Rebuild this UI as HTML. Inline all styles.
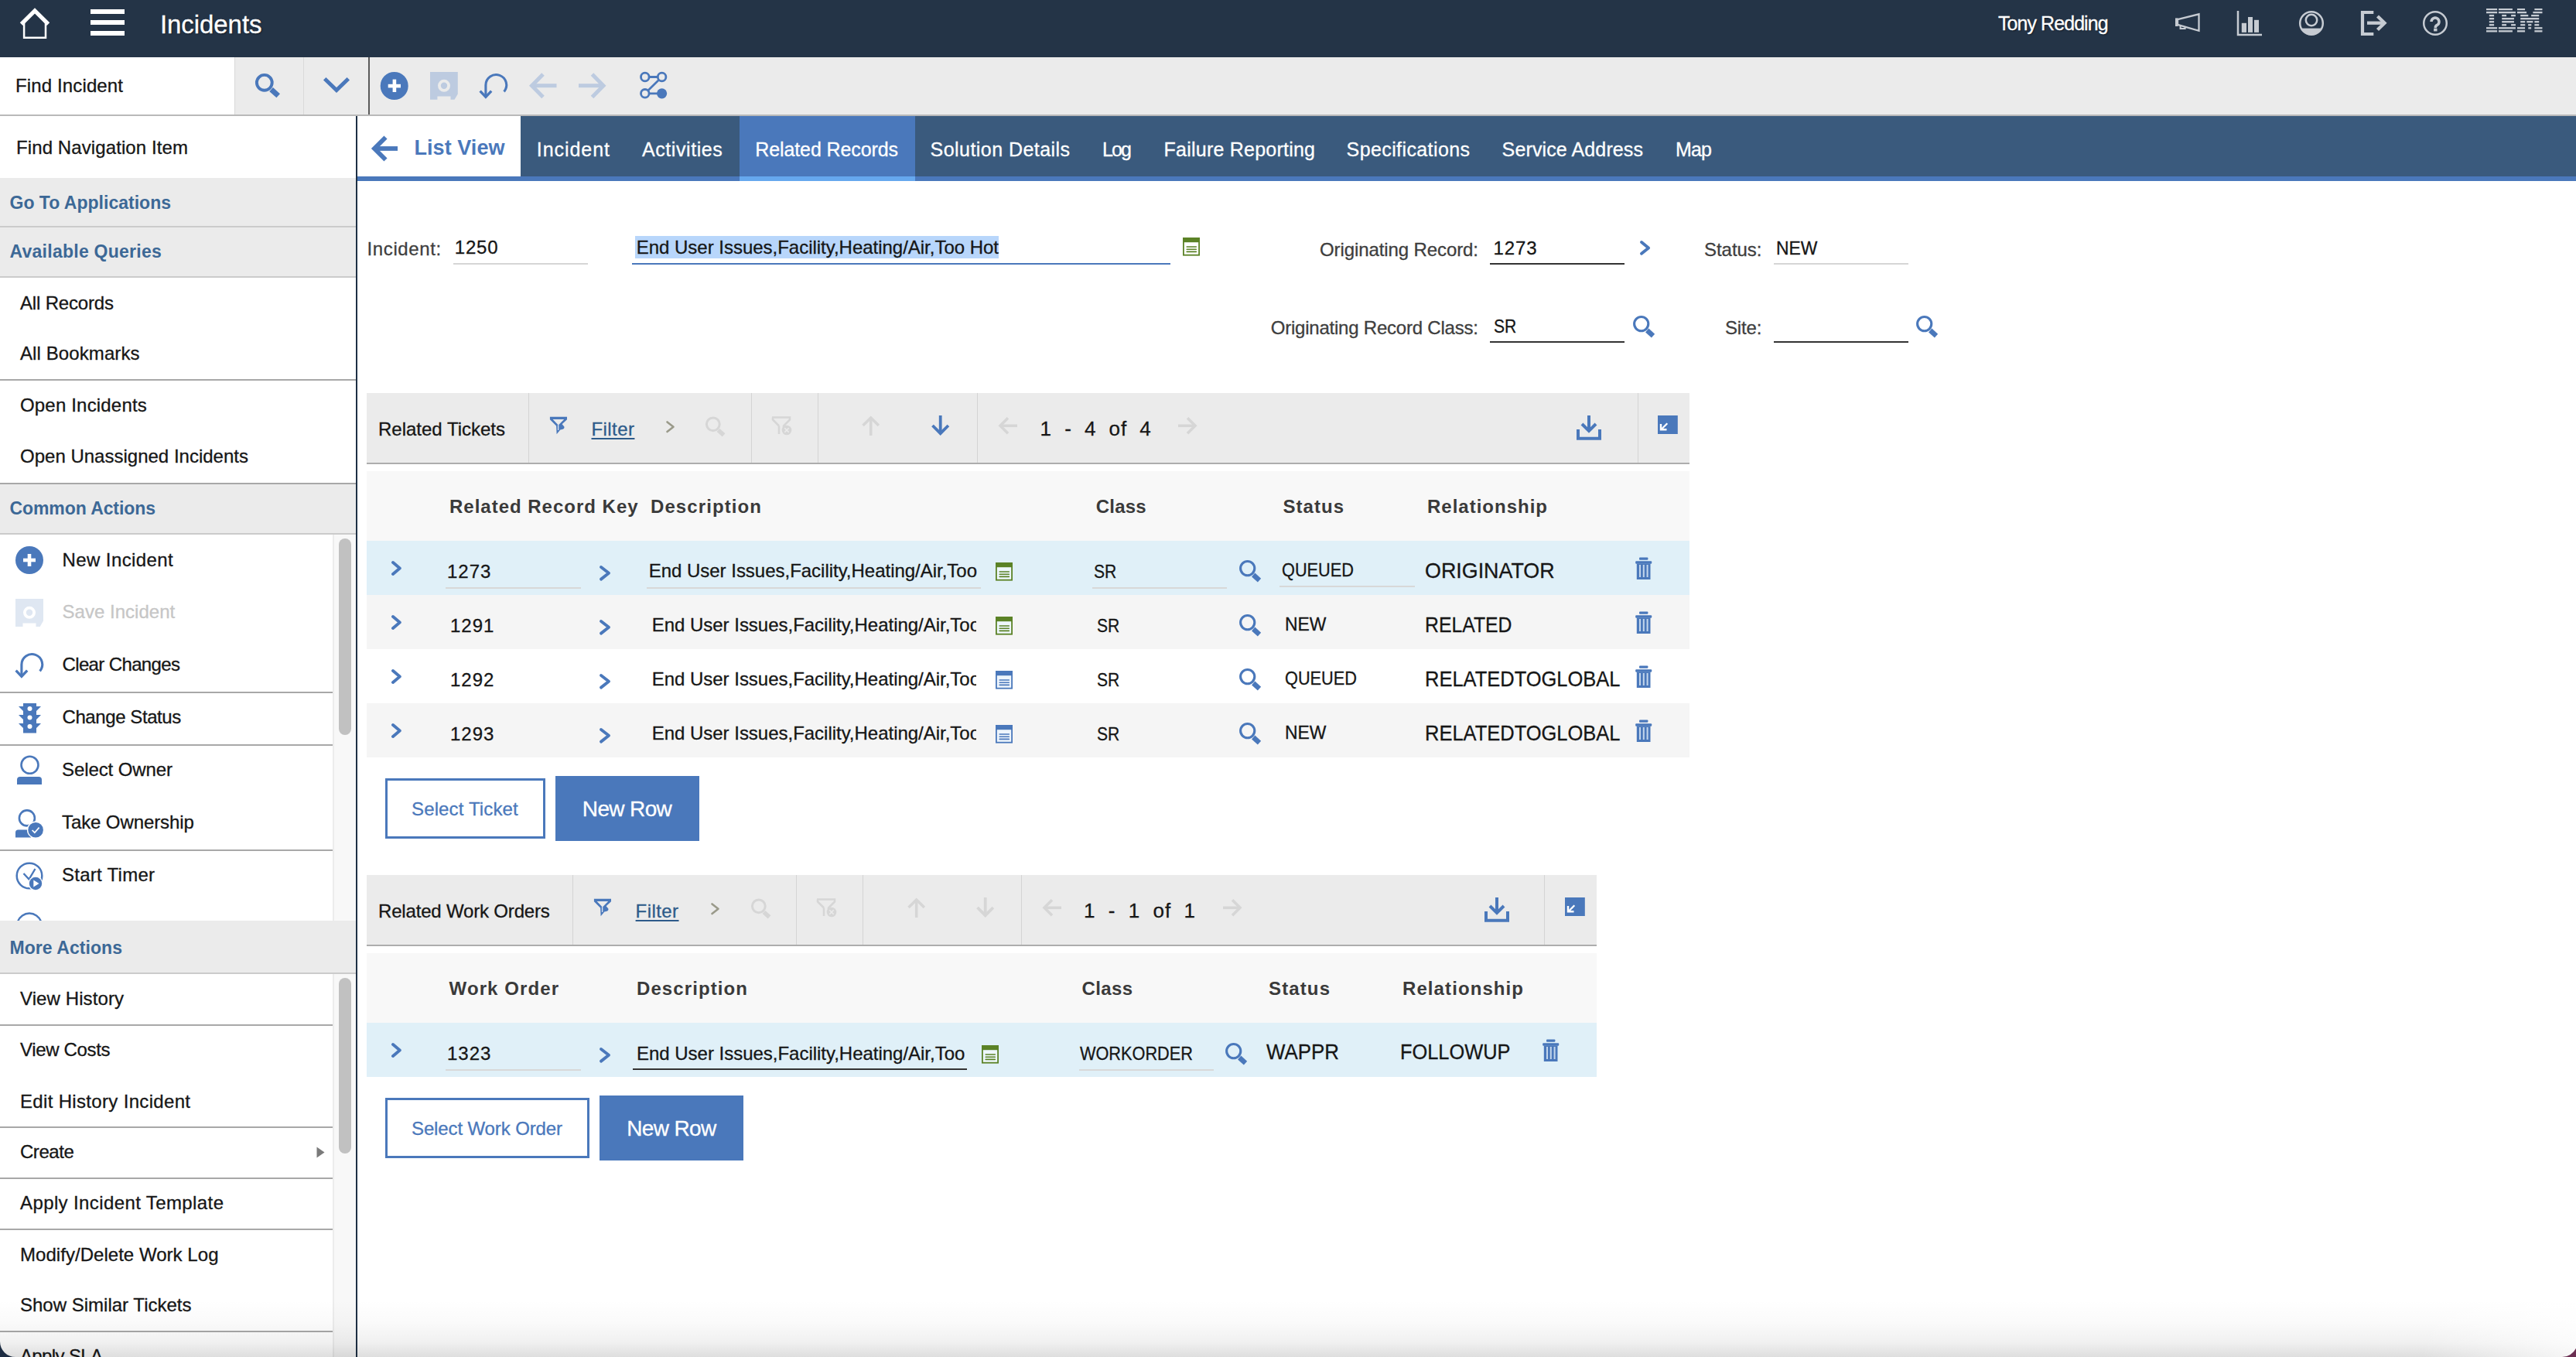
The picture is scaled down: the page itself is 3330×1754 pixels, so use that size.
<!DOCTYPE html>
<html><head><meta charset="utf-8"><title>Incidents</title>
<style>
html,body{margin:0;padding:0;}
body{width:3330px;height:1754px;overflow:hidden;position:relative;background:#fff;font-family:"Liberation Sans", sans-serif;}
div,svg{box-sizing:border-box;}
[id^=t]{-webkit-text-stroke:0.3px currentColor;}
[id^=t][style*="font-weight:700"]{-webkit-text-stroke:0;}
</style></head><body>
<div style="position:absolute;left:0px;top:0px;width:3330px;height:74px;background:#243447;"></div>
<svg style="position:absolute;left:0px;top:0px;overflow:visible;" width="80" height="74" viewBox="0 0 80 74"><path d="M31.1 29 V48.8 H59 V29" fill="none" stroke="#fff" stroke-width="2.5"/><path d="M27.6 31.2 L45 14 L62.4 31.2" fill="none" stroke="#fff" stroke-width="5.2"/></svg>
<div style="position:absolute;left:117px;top:11.6px;width:44px;height:6.6px;background:#fff;"></div>
<div style="position:absolute;left:117px;top:25.6px;width:44px;height:6.6px;background:#fff;"></div>
<div style="position:absolute;left:117px;top:39.6px;width:44px;height:6.6px;background:#fff;"></div>
<div id="t1" style="position:absolute;left:207.00px;top:14.57px;font-size:33px;line-height:33px;font-weight:400;color:#fff;white-space:pre;letter-spacing:-0.074px;text-shadow:1px 1px 2px rgba(0,0,0,.5);">Incidents</div>
<div id="t2" style="position:absolute;left:2583.00px;top:17.84px;font-size:25px;line-height:25px;font-weight:400;color:#fff;white-space:pre;letter-spacing:-0.936px;text-shadow:1px 1px 2px rgba(0,0,0,.5);">Tony Redding</div>
<svg style="position:absolute;left:2810px;top:14px;overflow:visible;" width="40" height="30" viewBox="0 0 40 30"><path d="M5 11.2 L32.5 4.3 V25.8 L5 17.8 Z" fill="none" stroke="#c6cbd2" stroke-width="2.3" stroke-linejoin="miter"/><rect x="2" y="9.4" width="3.6" height="10.6" fill="#c6cbd2"/><path d="M8.6 18.6 V23 H14.6 V20.5" fill="none" stroke="#c6cbd2" stroke-width="2.1"/></svg>
<svg style="position:absolute;left:2890px;top:12px;overflow:visible;" width="36" height="36" viewBox="0 0 36 36"><path d="M3 2 V33 H34" fill="none" stroke="#c6cbd2" stroke-width="2.5"/><rect x="7.8" y="17.8" width="6.2" height="12.1" fill="#c6cbd2"/><rect x="16" y="10" width="6" height="19.9" fill="#c6cbd2"/><rect x="24" y="13.8" width="6" height="16.1" fill="#c6cbd2"/></svg>
<svg style="position:absolute;left:2970px;top:12px;overflow:visible;" width="36" height="36" viewBox="0 0 36 36"><defs><clipPath id="uc"><circle cx="18" cy="18" r="15"/></clipPath></defs><circle cx="18" cy="18" r="14.8" fill="none" stroke="#c6cbd2" stroke-width="2.5"/><circle cx="18" cy="14" r="7.2" fill="none" stroke="#c6cbd2" stroke-width="2.5"/><rect x="0" y="24.6" width="36" height="12" fill="#c6cbd2" clip-path="url(#uc)" rx="0"/></svg>
<svg style="position:absolute;left:3050px;top:12px;overflow:visible;" width="40" height="36" viewBox="0 0 40 36"><path d="M18.3 4 H4 V32 H18.3" fill="none" stroke="#c6cbd2" stroke-width="4.2"/><path d="M10 17.7 H32" stroke="#c6cbd2" stroke-width="4.3"/><path d="M23.5 9 L32.5 17.7 L23.5 26.5" fill="none" stroke="#c6cbd2" stroke-width="4.3"/></svg>
<svg style="position:absolute;left:3130px;top:12px;overflow:visible;" width="36" height="36" viewBox="0 0 36 36"><circle cx="18" cy="18" r="14.8" fill="none" stroke="#c6cbd2" stroke-width="2.5"/><path d="M13 16 A5 5 0 1 1 20.6 20.3 Q18.3 21.4 18.3 23.2 V24.2" fill="none" stroke="#c6cbd2" stroke-width="3.5"/><rect x="16.1" y="24.8" width="4.4" height="3.6" fill="#c6cbd2"/></svg>
<svg style="position:absolute;left:3213.7989503431572px;top:10.853855470327009px;overflow:visible;" width="73" height="31" viewBox="0 0 73 31"><rect x="0.00" y="0.00" width="14.13" height="2.22" fill="#c6cbd2"/><rect x="15.95" y="0.00" width="17.97" height="2.22" fill="#c6cbd2"/><rect x="39.97" y="0.00" width="10.09" height="2.22" fill="#c6cbd2"/><rect x="62.37" y="0.00" width="10.09" height="2.22" fill="#c6cbd2"/><rect x="0.00" y="3.94" width="14.13" height="2.32" fill="#c6cbd2"/><rect x="15.95" y="3.94" width="22.00" height="2.32" fill="#c6cbd2"/><rect x="39.97" y="3.94" width="12.11" height="2.32" fill="#c6cbd2"/><rect x="60.36" y="3.94" width="12.11" height="2.32" fill="#c6cbd2"/><rect x="3.84" y="7.97" width="6.26" height="2.32" fill="#c6cbd2"/><rect x="20.19" y="7.97" width="5.85" height="2.32" fill="#c6cbd2"/><rect x="32.10" y="7.97" width="5.85" height="2.32" fill="#c6cbd2"/><rect x="44.21" y="7.97" width="10.09" height="2.32" fill="#c6cbd2"/><rect x="58.13" y="7.97" width="10.09" height="2.32" fill="#c6cbd2"/><rect x="3.84" y="12.01" width="6.26" height="2.32" fill="#c6cbd2"/><rect x="20.19" y="12.01" width="15.74" height="2.32" fill="#c6cbd2"/><rect x="44.21" y="12.01" width="24.02" height="2.32" fill="#c6cbd2"/><rect x="3.84" y="16.05" width="6.26" height="2.32" fill="#c6cbd2"/><rect x="20.19" y="16.05" width="15.74" height="2.32" fill="#c6cbd2"/><rect x="44.21" y="16.05" width="6.06" height="2.32" fill="#c6cbd2"/><rect x="52.28" y="16.05" width="8.07" height="2.32" fill="#c6cbd2"/><rect x="62.37" y="16.05" width="5.85" height="2.32" fill="#c6cbd2"/><rect x="3.84" y="20.08" width="6.26" height="2.32" fill="#c6cbd2"/><rect x="20.19" y="20.08" width="5.85" height="2.32" fill="#c6cbd2"/><rect x="32.10" y="20.08" width="5.85" height="2.32" fill="#c6cbd2"/><rect x="44.21" y="20.08" width="6.06" height="2.32" fill="#c6cbd2"/><rect x="54.10" y="20.08" width="4.24" height="2.32" fill="#c6cbd2"/><rect x="62.37" y="20.08" width="5.85" height="2.32" fill="#c6cbd2"/><rect x="0.00" y="24.12" width="14.13" height="2.32" fill="#c6cbd2"/><rect x="15.95" y="24.12" width="22.00" height="2.32" fill="#c6cbd2"/><rect x="39.97" y="24.12" width="10.09" height="2.32" fill="#c6cbd2"/><rect x="54.30" y="24.12" width="3.84" height="2.32" fill="#c6cbd2"/><rect x="62.37" y="24.12" width="10.09" height="2.32" fill="#c6cbd2"/><rect x="0.00" y="28.16" width="14.13" height="2.32" fill="#c6cbd2"/><rect x="15.95" y="28.16" width="17.97" height="2.32" fill="#c6cbd2"/><rect x="39.97" y="28.16" width="10.09" height="2.32" fill="#c6cbd2"/><rect x="62.37" y="28.16" width="10.09" height="2.32" fill="#c6cbd2"/></svg>
<div style="position:absolute;left:0px;top:74px;width:3330px;height:74px;background:#ebebeb;"></div>
<div style="position:absolute;left:0px;top:148px;width:3330px;height:2px;background:#b9b9b9;"></div>
<div style="position:absolute;left:0px;top:74px;width:303px;height:74px;background:#fff;"></div>
<div style="position:absolute;left:303px;top:74px;width:1px;height:74px;background:#d9d9d9;"></div>
<div style="position:absolute;left:392px;top:74px;width:1px;height:74px;background:#d9d9d9;"></div>
<div style="position:absolute;left:476px;top:74px;width:2px;height:74px;background:#5a5a5a;"></div>
<div id="t3" style="position:absolute;left:20.00px;top:99.18px;font-size:24px;line-height:24px;font-weight:400;color:#161616;white-space:pre;letter-spacing:0.132px;">Find Incident</div>
<svg style="position:absolute;left:320px;top:80px;overflow:visible;" width="50" height="60" viewBox="0 0 50 60"><circle cx="21.8" cy="26.8" r="9.9" fill="none" stroke="#4a78bb" stroke-width="3.9"/><g transform="translate(30.6 35.6) rotate(42)"><rect x="0" y="-3.4" width="12.2" height="6.8" fill="#4a78bb"/></g></svg>
<svg style="position:absolute;left:410px;top:90px;overflow:visible;" width="50" height="40" viewBox="0 0 50 40"><path d="M11.5 13.5 L25 26.5 L38.5 13.5" fill="none" stroke="#4a78bb" stroke-width="5" stroke-linecap="square"/></svg>
<svg style="position:absolute;left:490px;top:91px;overflow:visible;" width="40" height="40" viewBox="0 0 40 40"><circle cx="19.7" cy="20" r="18" fill="#4a78bb"/><rect x="11.7" y="17.8" width="16.3" height="4.6" fill="#fff"/><rect x="17.6" y="11.6" width="4.6" height="16.4" fill="#fff"/></svg>
<svg style="position:absolute;left:556px;top:93px;overflow:visible;" width="36" height="36" viewBox="0 0 36 36"><path d="M0 0 H35.8 V28.5 L31.5 35.7 H26.5 V31.5 H9.4 V35.7 H0 Z" fill="#bdcbe0"/><circle cx="18" cy="17.8" r="6.1" fill="none" stroke="#ebebeb" stroke-width="3.8"/></svg>
<svg style="position:absolute;left:619px;top:92.5px;overflow:visible;" width="40" height="40" viewBox="0 0 40 40"><path d="M8.9 32 V16.9 A13.4 13.4 0 1 1 32.6 25.5" fill="none" stroke="#4a78bb" stroke-width="3.1"/><path d="M1.6 24.6 L8.9 32.4 L16.2 24.6" fill="none" stroke="#4a78bb" stroke-width="3.3"/></svg>
<svg style="position:absolute;left:682px;top:92px;overflow:visible;" width="40" height="38" viewBox="0 0 40 38"><path d="M37.5 18.7 H6" stroke="#bdcbe0" stroke-width="5"/><path d="M20 4 L5.5 18.7 L20 33.4" fill="none" stroke="#bdcbe0" stroke-width="5"/></svg>
<svg style="position:absolute;left:746px;top:92px;overflow:visible;" width="40" height="38" viewBox="0 0 40 38"><path d="M2 18.7 H33.5" stroke="#bdcbe0" stroke-width="5"/><path d="M19.5 4 L34 18.7 L19.5 33.4" fill="none" stroke="#bdcbe0" stroke-width="5"/></svg>
<svg style="position:absolute;left:820px;top:88px;overflow:visible;" width="44" height="44" viewBox="0 0 44 44"><path d="M13.8 11.5 H35.6 L13.8 32.8 H35.6" fill="none" stroke="#4a78bb" stroke-width="2.8"/><circle cx="13.8" cy="11.5" r="5.3" fill="#ebebeb" stroke="#4a78bb" stroke-width="2.8"/><circle cx="35.6" cy="11.5" r="5.3" fill="#ebebeb" stroke="#4a78bb" stroke-width="2.8"/><circle cx="13.8" cy="32.8" r="5.3" fill="#ebebeb" stroke="#4a78bb" stroke-width="2.8"/><circle cx="35.6" cy="32.8" r="6.6" fill="#4a78bb"/></svg>
<div style="position:absolute;left:0px;top:150px;width:460px;height:80px;background:#fff;"></div>
<div id="t4" style="position:absolute;left:21.00px;top:178.93px;font-size:24px;line-height:24px;font-weight:400;color:#161616;white-space:pre;letter-spacing:0.100px;">Find Navigation Item</div>
<div style="position:absolute;left:0px;top:230px;width:460px;height:62px;background:#ebebeb;"></div>
<div style="position:absolute;left:0px;top:292px;width:460px;height:2px;background:#cbcbcb;"></div>
<div id="t5" style="position:absolute;left:12.50px;top:250.53px;font-size:23px;line-height:23px;font-weight:700;color:#3c6896;white-space:pre;letter-spacing:0.013px;">Go To Applications</div>
<div style="position:absolute;left:0px;top:294px;width:460px;height:63px;background:#ebebeb;"></div>
<div style="position:absolute;left:0px;top:357px;width:460px;height:2px;background:#cbcbcb;"></div>
<div id="t6" style="position:absolute;left:12.50px;top:314.28px;font-size:23px;line-height:23px;font-weight:700;color:#3c6896;white-space:pre;letter-spacing:0.254px;">Available Queries</div>
<div id="t7" style="position:absolute;left:26.00px;top:379.68px;font-size:24px;line-height:24px;font-weight:400;color:#161616;white-space:pre;letter-spacing:-0.172px;">All Records</div>
<div id="t8" style="position:absolute;left:26.00px;top:445.43px;font-size:24px;line-height:24px;font-weight:400;color:#161616;white-space:pre;letter-spacing:0.094px;">All Bookmarks</div>
<div style="position:absolute;left:0px;top:490px;width:460px;height:2px;background:#a8a8a8;"></div>
<div id="t9" style="position:absolute;left:26.00px;top:511.68px;font-size:24px;line-height:24px;font-weight:400;color:#161616;white-space:pre;letter-spacing:0.178px;">Open Incidents</div>
<div id="t10" style="position:absolute;left:26.00px;top:577.68px;font-size:24px;line-height:24px;font-weight:400;color:#161616;white-space:pre;letter-spacing:0.006px;">Open Unassigned Incidents</div>
<div style="position:absolute;left:0px;top:624px;width:460px;height:2px;background:#a8a8a8;"></div>
<div style="position:absolute;left:0px;top:626px;width:460px;height:63px;background:#ebebeb;"></div>
<div style="position:absolute;left:0px;top:689px;width:460px;height:2px;background:#cbcbcb;"></div>
<div id="t11" style="position:absolute;left:12.50px;top:646.28px;font-size:23px;line-height:23px;font-weight:700;color:#3c6896;white-space:pre;letter-spacing:-0.081px;">Common Actions</div>
<div style="position:absolute;left:430px;top:691px;width:30px;height:499px;background:#f8f8f8;"></div>
<div style="position:absolute;left:430px;top:691px;width:2px;height:499px;background:#ececec;"></div>
<div style="position:absolute;left:438px;top:696px;width:16px;height:254px;background:#c1c1c1;border-radius:8px;"></div>
<div style="position:absolute;left:0px;top:894px;width:430px;height:2px;background:#a8a8a8;"></div>
<div style="position:absolute;left:0px;top:962px;width:430px;height:2px;background:#a8a8a8;"></div>
<div style="position:absolute;left:0px;top:1098px;width:430px;height:2px;background:#a8a8a8;"></div>
<div id="t12" style="position:absolute;left:80.50px;top:712.18px;font-size:24px;line-height:24px;font-weight:400;color:#161616;white-space:pre;letter-spacing:0.409px;">New Incident</div>
<div id="t13" style="position:absolute;left:80.50px;top:779.18px;font-size:24px;line-height:24px;font-weight:400;color:#c6c6c6;white-space:pre;letter-spacing:0.026px;">Save Incident</div>
<div id="t14" style="position:absolute;left:80.50px;top:847.18px;font-size:24px;line-height:24px;font-weight:400;color:#161616;white-space:pre;letter-spacing:-0.633px;">Clear Changes</div>
<div id="t15" style="position:absolute;left:80.50px;top:915.18px;font-size:24px;line-height:24px;font-weight:400;color:#161616;white-space:pre;letter-spacing:-0.419px;">Change Status</div>
<div id="t16" style="position:absolute;left:80.00px;top:983.43px;font-size:24px;line-height:24px;font-weight:400;color:#161616;white-space:pre;letter-spacing:-0.097px;">Select Owner</div>
<div id="t17" style="position:absolute;left:80.00px;top:1050.93px;font-size:24px;line-height:24px;font-weight:400;color:#161616;white-space:pre;letter-spacing:-0.102px;">Take Ownership</div>
<div id="t18" style="position:absolute;left:80.00px;top:1119.18px;font-size:24px;line-height:24px;font-weight:400;color:#161616;white-space:pre;letter-spacing:0.264px;">Start Timer</div>
<svg style="position:absolute;left:20px;top:706px;overflow:visible;" width="36" height="36" viewBox="0 0 36 36"><circle cx="18" cy="18" r="18" fill="#4a78bb"/><rect x="10" y="15.7" width="16" height="4.6" fill="#fff"/><rect x="15.7" y="10" width="4.6" height="16" fill="#fff"/></svg>
<svg style="position:absolute;left:20px;top:774px;overflow:visible;" width="36" height="36" viewBox="0 0 36 36"><path d="M0 0 H36 V28.5 L31.7 36 H26.5 V31.5 H9.5 V36 H0 Z" fill="#dfe7f2"/><circle cx="18" cy="17.8" r="6.1" fill="none" stroke="#fff" stroke-width="3.8"/></svg>
<svg style="position:absolute;left:19px;top:842px;overflow:visible;" width="40" height="40" viewBox="0 0 40 40"><path d="M8.9 32 V16.9 A13.4 13.4 0 1 1 32.6 25.5" fill="none" stroke="#4a78bb" stroke-width="3.1"/><path d="M1.6 24.6 L8.9 32.4 L16.2 24.6" fill="none" stroke="#4a78bb" stroke-width="3.3"/></svg>
<svg style="position:absolute;left:22px;top:907px;overflow:visible;" width="34" height="44" viewBox="0 0 34 44"><rect x="8" y="2" width="17" height="38.5" fill="#4a78bb"/><path d="M2 6 H8 V12 Z M31 6 H25 V12 Z M2 17 H8 V23 Z M31 17 H25 V23 Z M2 28 H8 V34 Z M31 28 H25 V34 Z" fill="#4a78bb"/><circle cx="16.5" cy="9" r="3" fill="#fff"/><circle cx="16.5" cy="20.5" r="3" fill="#fff"/><circle cx="16.5" cy="32" r="3" fill="#fff"/></svg>
<svg style="position:absolute;left:20px;top:976px;overflow:visible;" width="36" height="40" viewBox="0 0 36 40"><circle cx="18.5" cy="12.8" r="11" fill="none" stroke="#4a78bb" stroke-width="2.6"/><path d="M2 38 V32 Q2 28 6 28 H30 Q34 28 34 32 V38 Z" fill="#4a78bb"/></svg>
<svg style="position:absolute;left:18px;top:1044px;overflow:visible;" width="40" height="40" viewBox="0 0 40 40"><circle cx="16.9" cy="13.4" r="10" fill="none" stroke="#4a78bb" stroke-width="2.6"/><path d="M2 38.5 V32 Q2 28.5 5.5 28.5 H22 V38.5 Z" fill="#4a78bb"/><circle cx="28.1" cy="28.7" r="11.2" fill="#fff"/><circle cx="28.1" cy="28.7" r="9.8" fill="#4a78bb"/><path d="M23.6 29 L26.8 32.2 L32.6 25.6" fill="none" stroke="#fff" stroke-width="1.7"/></svg>
<svg style="position:absolute;left:18px;top:1112px;overflow:visible;" width="40" height="40" viewBox="0 0 40 40"><circle cx="20" cy="20" r="16.3" fill="none" stroke="#4a78bb" stroke-width="2.5"/><path d="M12.5 17 L19.5 24.5 L27.5 11" fill="none" stroke="#4a78bb" stroke-width="2.4"/><circle cx="28" cy="30" r="9.5" fill="#fff"/><circle cx="28" cy="30" r="8.2" fill="#4a78bb"/><path d="M25.3 25.5 L32.5 30 L25.3 34.5 Z" fill="#fff"/></svg>
<svg style="position:absolute;left:18px;top:1180px;overflow:visible;" width="40" height="12" viewBox="0 0 40 12"><path d="M5 11 A16 16 0 0 1 35 11" fill="none" stroke="#4a78bb" stroke-width="2.5"/></svg>
<div style="position:absolute;left:0px;top:1190px;width:460px;height:67px;background:#ebebeb;"></div>
<div style="position:absolute;left:0px;top:1257px;width:460px;height:2px;background:#cbcbcb;"></div>
<div id="t19" style="position:absolute;left:12.50px;top:1213.53px;font-size:23px;line-height:23px;font-weight:700;color:#3c6896;white-space:pre;letter-spacing:0.061px;">More Actions</div>
<div style="position:absolute;left:430px;top:1259px;width:30px;height:495px;background:#f8f8f8;"></div>
<div style="position:absolute;left:430px;top:1259px;width:2px;height:495px;background:#ececec;"></div>
<div style="position:absolute;left:438px;top:1264px;width:16px;height:227px;background:#c1c1c1;border-radius:8px;"></div>
<div style="position:absolute;left:0px;top:1324px;width:430px;height:2px;background:#a8a8a8;"></div>
<div style="position:absolute;left:0px;top:1456px;width:430px;height:2px;background:#a8a8a8;"></div>
<div style="position:absolute;left:0px;top:1522px;width:430px;height:2px;background:#a8a8a8;"></div>
<div style="position:absolute;left:0px;top:1588px;width:430px;height:2px;background:#a8a8a8;"></div>
<div style="position:absolute;left:0px;top:1719.5px;width:430px;height:2px;background:#a8a8a8;"></div>
<div id="t20" style="position:absolute;left:26.00px;top:1279.18px;font-size:24px;line-height:24px;font-weight:400;color:#161616;white-space:pre;letter-spacing:0.097px;">View History</div>
<div id="t21" style="position:absolute;left:26.00px;top:1345.18px;font-size:24px;line-height:24px;font-weight:400;color:#161616;white-space:pre;letter-spacing:-0.345px;">View Costs</div>
<div id="t22" style="position:absolute;left:26.00px;top:1411.68px;font-size:24px;line-height:24px;font-weight:400;color:#161616;white-space:pre;letter-spacing:0.329px;">Edit History Incident</div>
<div id="t23" style="position:absolute;left:26.00px;top:1477.18px;font-size:24px;line-height:24px;font-weight:400;color:#161616;white-space:pre;letter-spacing:-0.459px;">Create</div>
<svg style="position:absolute;left:408px;top:1481px;overflow:visible;" width="14" height="18" viewBox="0 0 14 18"><path d="M1.5 1.5 L11.5 8.5 L1.5 15.5 Z" fill="#7a7a7a"/></svg>
<div id="t24" style="position:absolute;left:26.00px;top:1543.43px;font-size:24px;line-height:24px;font-weight:400;color:#161616;white-space:pre;letter-spacing:0.391px;">Apply Incident Template</div>
<div id="t25" style="position:absolute;left:26.00px;top:1609.68px;font-size:24px;line-height:24px;font-weight:400;color:#161616;white-space:pre;letter-spacing:0.039px;">Modify/Delete Work Log</div>
<div id="t26" style="position:absolute;left:26.00px;top:1675.18px;font-size:24px;line-height:24px;font-weight:400;color:#161616;white-space:pre;letter-spacing:0.006px;">Show Similar Tickets</div>
<div id="t27" style="position:absolute;left:26.00px;top:1740.68px;font-size:24px;line-height:24px;font-weight:400;color:#161616;white-space:pre;letter-spacing:-0.635px;">Apply SLA</div>
<div style="position:absolute;left:460px;top:150px;width:2px;height:1604px;background:#1e3045;"></div>
<div style="position:absolute;left:462px;top:150px;width:211px;height:78px;background:#fff;"></div>
<div style="position:absolute;left:673px;top:150px;width:2657px;height:78px;background:#3a5a7d;"></div>
<div style="position:absolute;left:956px;top:150px;width:227px;height:78px;background:#4a78bb;"></div>
<div style="position:absolute;left:462px;top:228px;width:2868px;height:5.6px;background:#4a78bb;"></div>
<div style="position:absolute;left:956px;top:228px;width:227px;height:5.6px;background:#66a8ee;"></div>
<svg style="position:absolute;left:478px;top:172px;overflow:visible;" width="40" height="40" viewBox="0 0 40 40"><path d="M36 20 H8" stroke="#4a78bb" stroke-width="5.8"/><path d="M20.5 5.5 L6 20 L20.5 34.5" fill="none" stroke="#4a78bb" stroke-width="5.8"/></svg>
<div id="t28" style="position:absolute;left:535.50px;top:178.39px;font-size:27px;line-height:27px;font-weight:700;color:#4a78bb;white-space:pre;letter-spacing:0.057px;">List View</div>
<div id="t29" style="position:absolute;left:693.75px;top:180.84px;font-size:25px;line-height:25px;font-weight:400;color:#fff;white-space:pre;letter-spacing:0.955px;">Incident</div>
<div id="t30" style="position:absolute;left:830.00px;top:180.84px;font-size:25px;line-height:25px;font-weight:400;color:#fff;white-space:pre;letter-spacing:0.568px;">Activities</div>
<div id="t31" style="position:absolute;left:976.25px;top:180.84px;font-size:25px;line-height:25px;font-weight:400;color:#fff;white-space:pre;letter-spacing:-0.105px;">Related Records</div>
<div id="t32" style="position:absolute;left:1202.60px;top:180.84px;font-size:25px;line-height:25px;font-weight:400;color:#fff;white-space:pre;letter-spacing:0.445px;">Solution Details</div>
<div id="t33" style="position:absolute;left:1425.00px;top:180.84px;font-size:25px;line-height:25px;font-weight:400;color:#fff;white-space:pre;letter-spacing:-1.859px;">Log</div>
<div id="t34" style="position:absolute;left:1504.60px;top:180.84px;font-size:25px;line-height:25px;font-weight:400;color:#fff;white-space:pre;letter-spacing:0.227px;">Failure Reporting</div>
<div id="t35" style="position:absolute;left:1740.60px;top:180.84px;font-size:25px;line-height:25px;font-weight:400;color:#fff;white-space:pre;letter-spacing:0.396px;">Specifications</div>
<div id="t36" style="position:absolute;left:1941.60px;top:180.84px;font-size:25px;line-height:25px;font-weight:400;color:#fff;white-space:pre;letter-spacing:0.126px;">Service Address</div>
<div id="t37" style="position:absolute;left:2166.00px;top:180.84px;font-size:25px;line-height:25px;font-weight:400;color:#fff;white-space:pre;letter-spacing:-0.820px;">Map</div>
<div id="t38" style="position:absolute;left:474.50px;top:310.43px;font-size:24px;line-height:24px;font-weight:400;color:#3e3e3e;white-space:pre;letter-spacing:0.627px;">Incident:</div>
<div id="t39" style="position:absolute;left:587.75px;top:307.68px;font-size:24px;line-height:24px;font-weight:400;color:#161616;white-space:pre;letter-spacing:0.786px;">1250</div>
<div style="position:absolute;left:586px;top:340px;width:174px;height:2px;background:#d6d6d6;"></div>
<div style="position:absolute;left:821px;top:304.5px;width:470px;height:29.5px;background:#b8d6fb;"></div>
<div id="t40" style="position:absolute;left:822.75px;top:307.68px;font-size:24px;line-height:24px;font-weight:400;color:#161616;white-space:pre;letter-spacing:-0.019px;">End User Issues,Facility,Heating/Air,Too Hot</div>
<div style="position:absolute;left:817px;top:340px;width:696px;height:2.2px;background:#4a78bb;"></div>
<svg style="position:absolute;left:1529px;top:307px;overflow:visible;" width="22" height="24" viewBox="0 0 22 24"><rect x="0.9" y="0.9" width="20.2" height="21.8" fill="#fff" stroke="#5b8226" stroke-width="1.8"/><rect x="0" y="0" width="22" height="6.2" fill="#5b8226"/><path d="M5.2 12 H17.3 M5.2 15.2 H17.3 M5.2 18.4 H17.3" stroke="#5b8226" stroke-width="1.6" stroke-linecap="round"/></svg>
<div id="t41" style="position:absolute;left:1706.00px;top:310.68px;font-size:24px;line-height:24px;font-weight:400;color:#3e3e3e;white-space:pre;letter-spacing:-0.098px;">Originating Record:</div>
<div id="t42" style="position:absolute;left:1930.60px;top:308.68px;font-size:24px;line-height:24px;font-weight:400;color:#161616;white-space:pre;letter-spacing:0.870px;">1273</div>
<div style="position:absolute;left:1926px;top:339.5px;width:174px;height:2.2px;background:#333;"></div>
<svg style="position:absolute;left:2118.0px;top:308.5px;overflow:visible;" width="17.1" height="22.8" viewBox="0 0 17.1 22.8"><path d="M4 4 L13.1 11.4 L4 18.8" fill="none" stroke="#4a78bb" stroke-width="3.9" stroke-linecap="round" stroke-linejoin="round"/></svg>
<div id="t43" style="position:absolute;left:2203.00px;top:310.68px;font-size:24px;line-height:24px;font-weight:400;color:#3e3e3e;white-space:pre;letter-spacing:-0.036px;">Status:</div>
<div id="t44" style="position:absolute;left:2296.00px;top:308.68px;font-size:24px;line-height:24px;font-weight:400;color:#161616;white-space:pre;letter-spacing:0px;transform:scaleX(0.9531);transform-origin:0 0;">NEW</div>
<div style="position:absolute;left:2292.5px;top:339.5px;width:174px;height:2.2px;background:#d6d6d6;"></div>
<div id="t45" style="position:absolute;left:1642.70px;top:411.68px;font-size:24px;line-height:24px;font-weight:400;color:#3e3e3e;white-space:pre;letter-spacing:-0.215px;">Originating Record Class:</div>
<div id="t46" style="position:absolute;left:1930.60px;top:409.68px;font-size:24px;line-height:24px;font-weight:400;color:#161616;white-space:pre;letter-spacing:0px;transform:scaleX(0.8776);transform-origin:0 0;">SR</div>
<div style="position:absolute;left:1926px;top:441px;width:174px;height:2.2px;background:#333;"></div>
<svg style="position:absolute;left:2111px;top:408px;overflow:visible;" width="30" height="30" viewBox="0 0 30 30"><circle cx="10.7" cy="10.6" r="9.1" fill="none" stroke="#4a78bb" stroke-width="3.1"/><g transform="translate(18.2 19) rotate(42)"><rect x="0" y="-3.2" width="10.5" height="6.4" fill="#4a78bb"/></g></svg>
<div id="t47" style="position:absolute;left:2230.00px;top:411.68px;font-size:24px;line-height:24px;font-weight:400;color:#3e3e3e;white-space:pre;letter-spacing:-0.133px;">Site:</div>
<div style="position:absolute;left:2292.5px;top:441px;width:174px;height:2.2px;background:#333;"></div>
<svg style="position:absolute;left:2477px;top:408px;overflow:visible;" width="30" height="30" viewBox="0 0 30 30"><circle cx="10.7" cy="10.6" r="9.1" fill="none" stroke="#4a78bb" stroke-width="3.1"/><g transform="translate(18.2 19) rotate(42)"><rect x="0" y="-3.2" width="10.5" height="6.4" fill="#4a78bb"/></g></svg>
<div style="position:absolute;left:474px;top:508px;width:1710px;height:90px;background:#ebebeb;"></div>
<div style="position:absolute;left:474px;top:598px;width:1710px;height:2px;background:#adadad;"></div>
<div style="position:absolute;left:683px;top:508px;width:1px;height:90px;background:#d4d4d4;"></div>
<div style="position:absolute;left:971px;top:508px;width:1px;height:90px;background:#d4d4d4;"></div>
<div style="position:absolute;left:1057px;top:508px;width:1px;height:90px;background:#d4d4d4;"></div>
<div style="position:absolute;left:1263px;top:508px;width:1px;height:90px;background:#d4d4d4;"></div>
<div style="position:absolute;left:2117px;top:508px;width:1px;height:90px;background:#d4d4d4;"></div>
<div id="t48" style="position:absolute;left:489.00px;top:543.18px;font-size:24px;line-height:24px;font-weight:400;color:#161616;white-space:pre;letter-spacing:-0.006px;">Related Tickets</div>
<svg style="position:absolute;left:699.7px;top:530px;overflow:visible;" width="40" height="40" viewBox="0 0 40 40"><path fill-rule="evenodd" fill="#4a78bb" d="M10.9 8.7 H33 V12.2 L26.6 18.3 L29.4 21.6 Q30 24.6 26.8 25 L24.3 25.4 L19.6 31.2 L19.1 20.6 L10.9 12.2 Z M14.6 12.1 H29.2 L21.8 19.4 Z"/><rect x="20.9" y="19.2" width="1.4" height="6.8" fill="#d8e2ef"/></svg>
<div id="t49" style="position:absolute;left:764.50px;top:543.18px;font-size:24px;line-height:24px;font-weight:400;color:#2e5b8a;white-space:pre;letter-spacing:0.431px;text-decoration:underline;text-decoration-thickness:1.6px;text-underline-offset:3px;">Filter</div>
<svg style="position:absolute;left:860px;top:543px;overflow:visible;" width="14" height="18" viewBox="0 0 14 18"><path d="M2.5 2.5 L10.5 8.7 L2.5 15" fill="none" stroke="#9a9a8a" stroke-width="2.6" stroke-linejoin="round" stroke-linecap="round"/></svg>
<svg style="position:absolute;left:911px;top:538px;overflow:visible;" width="28" height="28" viewBox="0 0 28 28"><circle cx="10.8" cy="10.3" r="8.4" fill="none" stroke="#d6d6d6" stroke-width="3"/><g transform="translate(17.5 18) rotate(42)"><rect x="0" y="-2.8" width="9.5" height="5.6" fill="#d6d6d6"/></g></svg>
<svg style="position:absolute;left:997px;top:538px;overflow:visible;" width="28" height="26" viewBox="0 0 28 26"><path d="M1 1.5 H24 V4.5 L16 12.5 V16 M10 12.5 L2 4.5 V1.5 M10 12.5 V23" fill="none" stroke="#d6d6d6" stroke-width="2.6"/><circle cx="20" cy="18" r="6.3" fill="#d6d6d6"/><path d="M17.3 15.3 L22.7 20.7 M22.7 15.3 L17.3 20.7" stroke="#ebebeb" stroke-width="1.6"/></svg>
<svg style="position:absolute;left:1113px;top:537px;overflow:visible;" width="26" height="27" viewBox="0 0 26 27"><path d="M12.7 26 V3" stroke="#d6d6d6" stroke-width="3.6"/><path d="M2.5 13 L12.7 3 L22.9 13" fill="none" stroke="#d6d6d6" stroke-width="3.6"/></svg>
<svg style="position:absolute;left:1203px;top:537px;overflow:visible;" width="26" height="27" viewBox="0 0 26 27"><path d="M12.7 0 V23" stroke="#4a78bb" stroke-width="3.8"/><path d="M2.5 13 L12.7 23.2 L22.9 13" fill="none" stroke="#4a78bb" stroke-width="3.8"/></svg>
<svg style="position:absolute;left:1290px;top:538px;overflow:visible;" width="26" height="26" viewBox="0 0 26 26"><path d="M25 12.3 H3" stroke="#d6d6d6" stroke-width="3.6"/><path d="M13 2.3 L3 12.3 L13 22.3" fill="none" stroke="#d6d6d6" stroke-width="3.6"/></svg>
<div id="t50" style="position:absolute;left:1344.60px;top:541.49px;font-size:26px;line-height:26px;font-weight:400;color:#161616;white-space:pre;letter-spacing:0.899px;">1  -  4  of  4</div>
<svg style="position:absolute;left:1523px;top:538px;overflow:visible;" width="26" height="26" viewBox="0 0 26 26"><path d="M0 12.3 H22" stroke="#d6d6d6" stroke-width="3.6"/><path d="M12 2.3 L22 12.3 L12 22.3" fill="none" stroke="#d6d6d6" stroke-width="3.6"/></svg>
<svg style="position:absolute;left:2038px;top:536px;overflow:visible;" width="34" height="34" viewBox="0 0 34 34"><path d="M2 19 V30.8 H30 V19" fill="none" stroke="#4a78bb" stroke-width="4" stroke-linejoin="miter"/><path d="M16 1 V21" stroke="#4a78bb" stroke-width="4"/><path d="M7 12 L16 21 L25 12" fill="none" stroke="#4a78bb" stroke-width="4"/></svg>
<svg style="position:absolute;left:2143px;top:537px;overflow:visible;" width="26" height="25" viewBox="0 0 26 25"><rect x="0" y="0" width="25.8" height="24" fill="#4a78bb"/><path d="M12.3 10.3 L4.8 17.8" stroke="#fff" stroke-width="2.2"/><path d="M4 11 V18.3 H11.5" fill="none" stroke="#fff" stroke-width="2.4"/></svg>
<div style="position:absolute;left:474px;top:609px;width:1710px;height:90px;background:#f8f8f8;"></div>
<div id="t51" style="position:absolute;left:581.00px;top:642.68px;font-size:24px;line-height:24px;font-weight:700;color:#3a3a3a;white-space:pre;letter-spacing:0.991px;">Related Record Key</div>
<div id="t52" style="position:absolute;left:841.00px;top:642.68px;font-size:24px;line-height:24px;font-weight:700;color:#3a3a3a;white-space:pre;letter-spacing:1.097px;">Description</div>
<div id="t53" style="position:absolute;left:1416.80px;top:642.68px;font-size:24px;line-height:24px;font-weight:700;color:#3a3a3a;white-space:pre;letter-spacing:0.188px;">Class</div>
<div id="t54" style="position:absolute;left:1658.50px;top:642.68px;font-size:24px;line-height:24px;font-weight:700;color:#3a3a3a;white-space:pre;letter-spacing:1.028px;">Status</div>
<div id="t55" style="position:absolute;left:1845.00px;top:642.68px;font-size:24px;line-height:24px;font-weight:700;color:#3a3a3a;white-space:pre;letter-spacing:0.999px;">Relationship</div>
<div style="position:absolute;left:474px;top:699px;width:1710px;height:70px;background:#e0f0f8;"></div>
<svg style="position:absolute;left:503.99999999999994px;top:723.3px;overflow:visible;" width="16.8" height="23.0" viewBox="0 0 16.8 23.0"><path d="M4 4 L12.8 11.5 L4 19.0" fill="none" stroke="#4a78bb" stroke-width="3.9" stroke-linecap="round" stroke-linejoin="round"/></svg>
<div id="t56" style="position:absolute;left:578.00px;top:727.08px;font-size:24px;line-height:24px;font-weight:400;color:#161616;white-space:pre;letter-spacing:1.003px;">1273</div>
<div style="position:absolute;left:575.7px;top:759px;width:175px;height:2px;background:#d8d8d8;"></div>
<svg style="position:absolute;left:772.5px;top:728.5px;overflow:visible;" width="18" height="23.6" viewBox="0 0 18 23.6"><path d="M4 4 L14 11.8 L4 19.6" fill="none" stroke="#4a78bb" stroke-width="3.9" stroke-linecap="round" stroke-linejoin="round"/></svg>
<div style="position:absolute;left:838.70px;top:722.08px;width:425.29999999999995px;height:32px;overflow:hidden"><div id="t57" style="position:absolute;left:0;top:4px;font-size:24px;line-height:24px;color:#161616;white-space:pre;letter-spacing:-0.019px;">End User Issues,Facility,Heating/Air,Too Hot</div></div>
<div style="position:absolute;left:836px;top:759px;width:432px;height:2px;background:#d8d8d8;"></div>
<svg style="position:absolute;left:1287px;top:726.5px;overflow:visible;" width="22" height="24" viewBox="0 0 22 24"><rect x="0.9" y="0.9" width="20.2" height="21.8" fill="#eef7fc" stroke="#5b8226" stroke-width="1.8"/><rect x="0" y="0" width="22" height="6.2" fill="#5b8226"/><path d="M5.2 12 H17.3 M5.2 15.2 H17.3 M5.2 18.4 H17.3" stroke="#5b8226" stroke-width="1.6" stroke-linecap="round"/></svg>
<div id="t58" style="position:absolute;left:1414.00px;top:727.08px;font-size:24px;line-height:24px;font-weight:400;color:#161616;white-space:pre;letter-spacing:0px;transform:scaleX(0.8776);transform-origin:0 0;">SR</div>
<div style="position:absolute;left:1412px;top:759px;width:174px;height:2px;background:#d8d8d8;"></div>
<svg style="position:absolute;left:1602px;top:724px;overflow:visible;" width="30" height="30" viewBox="0 0 30 30"><circle cx="10.7" cy="10.6" r="9.1" fill="none" stroke="#4a78bb" stroke-width="3.1"/><g transform="translate(18.2 19) rotate(42)"><rect x="0" y="-3.2" width="10.5" height="6.4" fill="#4a78bb"/></g></svg>
<div id="t59" style="position:absolute;left:1656.50px;top:725.18px;font-size:24px;line-height:24px;font-weight:400;color:#161616;white-space:pre;letter-spacing:0px;transform:scaleX(0.9057);transform-origin:0 0;">QUEUED</div>
<div style="position:absolute;left:1654px;top:757px;width:174.7px;height:2px;background:#d8d8d8;"></div>
<div id="t60" style="position:absolute;left:1841.50px;top:723.80px;font-size:28px;line-height:28px;font-weight:400;color:#161616;white-space:pre;letter-spacing:0px;transform:scaleX(0.9591);transform-origin:0 0;">ORIGINATOR</div>
<svg style="position:absolute;left:2114px;top:720px;overflow:visible;" width="22" height="30" viewBox="0 0 22 30"><rect x="5" y="0.5" width="11.4" height="3.2" rx="1" fill="#4a78bb"/><rect x="0.2" y="5.3" width="21" height="3.4" rx="1" fill="#4a78bb"/><path d="M1.8 8.5 H19.5 V29 H1.8 Z" fill="#4a78bb"/><rect x="5" y="10" width="2" height="16" fill="#c3d6ec"/><rect x="9.8" y="10" width="2" height="16" fill="#c3d6ec"/><rect x="14.6" y="10" width="2" height="16" fill="#c3d6ec"/></svg>
<div style="position:absolute;left:474px;top:769px;width:1710px;height:70px;background:#f5f5f5;"></div>
<svg style="position:absolute;left:503.99999999999994px;top:793.3px;overflow:visible;" width="16.8" height="23.0" viewBox="0 0 16.8 23.0"><path d="M4 4 L12.8 11.5 L4 19.0" fill="none" stroke="#4a78bb" stroke-width="3.9" stroke-linecap="round" stroke-linejoin="round"/></svg>
<div id="t61" style="position:absolute;left:582.00px;top:797.48px;font-size:24px;line-height:24px;font-weight:400;color:#161616;white-space:pre;letter-spacing:1.003px;">1291</div>
<svg style="position:absolute;left:772.5px;top:798.5px;overflow:visible;" width="18" height="23.6" viewBox="0 0 18 23.6"><path d="M4 4 L14 11.8 L4 19.6" fill="none" stroke="#4a78bb" stroke-width="3.9" stroke-linecap="round" stroke-linejoin="round"/></svg>
<div style="position:absolute;left:842.70px;top:792.48px;width:419.5999999999999px;height:32px;overflow:hidden"><div id="t62" style="position:absolute;left:0;top:4px;font-size:24px;line-height:24px;color:#161616;white-space:pre;letter-spacing:-0.019px;">End User Issues,Facility,Heating/Air,Too Hot</div></div>
<svg style="position:absolute;left:1287px;top:796.5px;overflow:visible;" width="22" height="24" viewBox="0 0 22 24"><rect x="0.9" y="0.9" width="20.2" height="21.8" fill="#eef7fc" stroke="#5b8226" stroke-width="1.8"/><rect x="0" y="0" width="22" height="6.2" fill="#5b8226"/><path d="M5.2 12 H17.3 M5.2 15.2 H17.3 M5.2 18.4 H17.3" stroke="#5b8226" stroke-width="1.6" stroke-linecap="round"/></svg>
<div id="t63" style="position:absolute;left:1418.00px;top:797.48px;font-size:24px;line-height:24px;font-weight:400;color:#161616;white-space:pre;letter-spacing:0px;transform:scaleX(0.8776);transform-origin:0 0;">SR</div>
<svg style="position:absolute;left:1602px;top:794px;overflow:visible;" width="30" height="30" viewBox="0 0 30 30"><circle cx="10.7" cy="10.6" r="9.1" fill="none" stroke="#4a78bb" stroke-width="3.1"/><g transform="translate(18.2 19) rotate(42)"><rect x="0" y="-3.2" width="10.5" height="6.4" fill="#4a78bb"/></g></svg>
<div id="t64" style="position:absolute;left:1660.50px;top:795.18px;font-size:24px;line-height:24px;font-weight:400;color:#161616;white-space:pre;letter-spacing:0px;transform:scaleX(0.9531);transform-origin:0 0;">NEW</div>
<div id="t65" style="position:absolute;left:1841.50px;top:793.80px;font-size:28px;line-height:28px;font-weight:400;color:#161616;white-space:pre;letter-spacing:0px;transform:scaleX(0.8852);transform-origin:0 0;">RELATED</div>
<svg style="position:absolute;left:2114px;top:790px;overflow:visible;" width="22" height="30" viewBox="0 0 22 30"><rect x="5" y="0.5" width="11.4" height="3.2" rx="1" fill="#4a78bb"/><rect x="0.2" y="5.3" width="21" height="3.4" rx="1" fill="#4a78bb"/><path d="M1.8 8.5 H19.5 V29 H1.8 Z" fill="#4a78bb"/><rect x="5" y="10" width="2" height="16" fill="#c3d6ec"/><rect x="9.8" y="10" width="2" height="16" fill="#c3d6ec"/><rect x="14.6" y="10" width="2" height="16" fill="#c3d6ec"/></svg>
<div style="position:absolute;left:474px;top:839px;width:1710px;height:70px;background:#fff;"></div>
<svg style="position:absolute;left:503.99999999999994px;top:863.3px;overflow:visible;" width="16.8" height="23.0" viewBox="0 0 16.8 23.0"><path d="M4 4 L12.8 11.5 L4 19.0" fill="none" stroke="#4a78bb" stroke-width="3.9" stroke-linecap="round" stroke-linejoin="round"/></svg>
<div id="t66" style="position:absolute;left:582.00px;top:867.48px;font-size:24px;line-height:24px;font-weight:400;color:#161616;white-space:pre;letter-spacing:1.003px;">1292</div>
<svg style="position:absolute;left:772.5px;top:868.5px;overflow:visible;" width="18" height="23.6" viewBox="0 0 18 23.6"><path d="M4 4 L14 11.8 L4 19.6" fill="none" stroke="#4a78bb" stroke-width="3.9" stroke-linecap="round" stroke-linejoin="round"/></svg>
<div style="position:absolute;left:842.70px;top:862.48px;width:419.5999999999999px;height:32px;overflow:hidden"><div id="t67" style="position:absolute;left:0;top:4px;font-size:24px;line-height:24px;color:#161616;white-space:pre;letter-spacing:-0.019px;">End User Issues,Facility,Heating/Air,Too Hot</div></div>
<svg style="position:absolute;left:1287px;top:866.5px;overflow:visible;" width="22" height="24" viewBox="0 0 22 24"><rect x="0.9" y="0.9" width="20.2" height="21.8" fill="#eef5fc" stroke="#4a78bb" stroke-width="1.8"/><rect x="0" y="0" width="22" height="6.2" fill="#4a78bb"/><path d="M5.2 12 H17.3 M5.2 15.2 H17.3 M5.2 18.4 H17.3" stroke="#4a78bb" stroke-width="1.6" stroke-linecap="round"/></svg>
<div id="t68" style="position:absolute;left:1418.00px;top:867.48px;font-size:24px;line-height:24px;font-weight:400;color:#161616;white-space:pre;letter-spacing:0px;transform:scaleX(0.8776);transform-origin:0 0;">SR</div>
<svg style="position:absolute;left:1602px;top:864px;overflow:visible;" width="30" height="30" viewBox="0 0 30 30"><circle cx="10.7" cy="10.6" r="9.1" fill="none" stroke="#4a78bb" stroke-width="3.1"/><g transform="translate(18.2 19) rotate(42)"><rect x="0" y="-3.2" width="10.5" height="6.4" fill="#4a78bb"/></g></svg>
<div id="t69" style="position:absolute;left:1660.50px;top:865.18px;font-size:24px;line-height:24px;font-weight:400;color:#161616;white-space:pre;letter-spacing:0px;transform:scaleX(0.9057);transform-origin:0 0;">QUEUED</div>
<div id="t70" style="position:absolute;left:1841.50px;top:863.80px;font-size:28px;line-height:28px;font-weight:400;color:#161616;white-space:pre;letter-spacing:0px;transform:scaleX(0.9100);transform-origin:0 0;">RELATEDTOGLOBAL</div>
<svg style="position:absolute;left:2114px;top:860px;overflow:visible;" width="22" height="30" viewBox="0 0 22 30"><rect x="5" y="0.5" width="11.4" height="3.2" rx="1" fill="#4a78bb"/><rect x="0.2" y="5.3" width="21" height="3.4" rx="1" fill="#4a78bb"/><path d="M1.8 8.5 H19.5 V29 H1.8 Z" fill="#4a78bb"/><rect x="5" y="10" width="2" height="16" fill="#c3d6ec"/><rect x="9.8" y="10" width="2" height="16" fill="#c3d6ec"/><rect x="14.6" y="10" width="2" height="16" fill="#c3d6ec"/></svg>
<div style="position:absolute;left:474px;top:909px;width:1710px;height:70px;background:#f5f5f5;"></div>
<svg style="position:absolute;left:503.99999999999994px;top:933.3px;overflow:visible;" width="16.8" height="23.0" viewBox="0 0 16.8 23.0"><path d="M4 4 L12.8 11.5 L4 19.0" fill="none" stroke="#4a78bb" stroke-width="3.9" stroke-linecap="round" stroke-linejoin="round"/></svg>
<div id="t71" style="position:absolute;left:582.00px;top:937.48px;font-size:24px;line-height:24px;font-weight:400;color:#161616;white-space:pre;letter-spacing:1.003px;">1293</div>
<svg style="position:absolute;left:772.5px;top:938.5px;overflow:visible;" width="18" height="23.6" viewBox="0 0 18 23.6"><path d="M4 4 L14 11.8 L4 19.6" fill="none" stroke="#4a78bb" stroke-width="3.9" stroke-linecap="round" stroke-linejoin="round"/></svg>
<div style="position:absolute;left:842.70px;top:932.48px;width:419.5999999999999px;height:32px;overflow:hidden"><div id="t72" style="position:absolute;left:0;top:4px;font-size:24px;line-height:24px;color:#161616;white-space:pre;letter-spacing:-0.019px;">End User Issues,Facility,Heating/Air,Too Hot</div></div>
<svg style="position:absolute;left:1287px;top:936.5px;overflow:visible;" width="22" height="24" viewBox="0 0 22 24"><rect x="0.9" y="0.9" width="20.2" height="21.8" fill="#eef5fc" stroke="#4a78bb" stroke-width="1.8"/><rect x="0" y="0" width="22" height="6.2" fill="#4a78bb"/><path d="M5.2 12 H17.3 M5.2 15.2 H17.3 M5.2 18.4 H17.3" stroke="#4a78bb" stroke-width="1.6" stroke-linecap="round"/></svg>
<div id="t73" style="position:absolute;left:1418.00px;top:937.48px;font-size:24px;line-height:24px;font-weight:400;color:#161616;white-space:pre;letter-spacing:0px;transform:scaleX(0.8776);transform-origin:0 0;">SR</div>
<svg style="position:absolute;left:1602px;top:934px;overflow:visible;" width="30" height="30" viewBox="0 0 30 30"><circle cx="10.7" cy="10.6" r="9.1" fill="none" stroke="#4a78bb" stroke-width="3.1"/><g transform="translate(18.2 19) rotate(42)"><rect x="0" y="-3.2" width="10.5" height="6.4" fill="#4a78bb"/></g></svg>
<div id="t74" style="position:absolute;left:1660.50px;top:935.18px;font-size:24px;line-height:24px;font-weight:400;color:#161616;white-space:pre;letter-spacing:0px;transform:scaleX(0.9531);transform-origin:0 0;">NEW</div>
<div id="t75" style="position:absolute;left:1841.50px;top:933.80px;font-size:28px;line-height:28px;font-weight:400;color:#161616;white-space:pre;letter-spacing:0px;transform:scaleX(0.9100);transform-origin:0 0;">RELATEDTOGLOBAL</div>
<svg style="position:absolute;left:2114px;top:930px;overflow:visible;" width="22" height="30" viewBox="0 0 22 30"><rect x="5" y="0.5" width="11.4" height="3.2" rx="1" fill="#4a78bb"/><rect x="0.2" y="5.3" width="21" height="3.4" rx="1" fill="#4a78bb"/><path d="M1.8 8.5 H19.5 V29 H1.8 Z" fill="#4a78bb"/><rect x="5" y="10" width="2" height="16" fill="#c3d6ec"/><rect x="9.8" y="10" width="2" height="16" fill="#c3d6ec"/><rect x="14.6" y="10" width="2" height="16" fill="#c3d6ec"/></svg>
<div style="position:absolute;left:498px;top:1006px;width:207px;height:78px;background:#fff;border:3px solid #4a78bb;"></div>
<div id="t76" style="position:absolute;left:532.00px;top:1034.38px;font-size:24px;line-height:24px;font-weight:400;color:#4a78bb;white-space:pre;letter-spacing:0.136px;">Select Ticket</div>
<div style="position:absolute;left:718px;top:1003px;width:186px;height:83.5px;background:#4a78bb;"></div>
<div id="t77" style="position:absolute;left:752.80px;top:1031.70px;font-size:28px;line-height:28px;font-weight:400;color:#fff;white-space:pre;letter-spacing:-0.635px;">New Row</div>
<div style="position:absolute;left:474px;top:1131px;width:1590px;height:90px;background:#ebebeb;"></div>
<div style="position:absolute;left:474px;top:1221px;width:1590px;height:2px;background:#adadad;"></div>
<div style="position:absolute;left:740px;top:1131px;width:1px;height:90px;background:#d4d4d4;"></div>
<div style="position:absolute;left:1029px;top:1131px;width:1px;height:90px;background:#d4d4d4;"></div>
<div style="position:absolute;left:1115px;top:1131px;width:1px;height:90px;background:#d4d4d4;"></div>
<div style="position:absolute;left:1320px;top:1131px;width:1px;height:90px;background:#d4d4d4;"></div>
<div style="position:absolute;left:1996px;top:1131px;width:1px;height:90px;background:#d4d4d4;"></div>
<div id="t78" style="position:absolute;left:489.00px;top:1166.18px;font-size:24px;line-height:24px;font-weight:400;color:#161616;white-space:pre;letter-spacing:-0.176px;">Related Work Orders</div>
<svg style="position:absolute;left:756.6px;top:1153px;overflow:visible;" width="40" height="40" viewBox="0 0 40 40"><path fill-rule="evenodd" fill="#4a78bb" d="M10.9 8.7 H33 V12.2 L26.6 18.3 L29.4 21.6 Q30 24.6 26.8 25 L24.3 25.4 L19.6 31.2 L19.1 20.6 L10.9 12.2 Z M14.6 12.1 H29.2 L21.8 19.4 Z"/><rect x="20.9" y="19.2" width="1.4" height="6.8" fill="#d8e2ef"/></svg>
<div id="t79" style="position:absolute;left:821.60px;top:1166.18px;font-size:24px;line-height:24px;font-weight:400;color:#2e5b8a;white-space:pre;letter-spacing:0.431px;text-decoration:underline;text-decoration-thickness:1.6px;text-underline-offset:3px;">Filter</div>
<svg style="position:absolute;left:918px;top:1166px;overflow:visible;" width="14" height="18" viewBox="0 0 14 18"><path d="M2.5 2.5 L10.5 8.7 L2.5 15" fill="none" stroke="#9a9a8a" stroke-width="2.6" stroke-linejoin="round" stroke-linecap="round"/></svg>
<svg style="position:absolute;left:970px;top:1161px;overflow:visible;" width="28" height="28" viewBox="0 0 28 28"><circle cx="10.8" cy="10.3" r="8.4" fill="none" stroke="#d6d6d6" stroke-width="3"/><g transform="translate(17.5 18) rotate(42)"><rect x="0" y="-2.8" width="9.5" height="5.6" fill="#d6d6d6"/></g></svg>
<svg style="position:absolute;left:1055px;top:1161px;overflow:visible;" width="28" height="26" viewBox="0 0 28 26"><path d="M1 1.5 H24 V4.5 L16 12.5 V16 M10 12.5 L2 4.5 V1.5 M10 12.5 V23" fill="none" stroke="#d6d6d6" stroke-width="2.6"/><circle cx="20" cy="18" r="6.3" fill="#d6d6d6"/><path d="M17.3 15.3 L22.7 20.7 M22.7 15.3 L17.3 20.7" stroke="#ebebeb" stroke-width="1.6"/></svg>
<svg style="position:absolute;left:1172px;top:1160px;overflow:visible;" width="26" height="27" viewBox="0 0 26 27"><path d="M12.7 26 V3" stroke="#d6d6d6" stroke-width="3.6"/><path d="M2.5 13 L12.7 3 L22.9 13" fill="none" stroke="#d6d6d6" stroke-width="3.6"/></svg>
<svg style="position:absolute;left:1261px;top:1160px;overflow:visible;" width="26" height="27" viewBox="0 0 26 27"><path d="M12.7 0 V23" stroke="#d6d6d6" stroke-width="3.8"/><path d="M2.5 13 L12.7 23.2 L22.9 13" fill="none" stroke="#d6d6d6" stroke-width="3.8"/></svg>
<svg style="position:absolute;left:1347px;top:1161px;overflow:visible;" width="26" height="26" viewBox="0 0 26 26"><path d="M25 12.3 H3" stroke="#d6d6d6" stroke-width="3.6"/><path d="M13 2.3 L3 12.3 L13 22.3" fill="none" stroke="#d6d6d6" stroke-width="3.6"/></svg>
<div id="t80" style="position:absolute;left:1401.00px;top:1164.49px;font-size:26px;line-height:26px;font-weight:400;color:#161616;white-space:pre;letter-spacing:0.960px;">1  -  1  of  1</div>
<svg style="position:absolute;left:1580.6px;top:1161px;overflow:visible;" width="26" height="26" viewBox="0 0 26 26"><path d="M0 12.3 H22" stroke="#d6d6d6" stroke-width="3.6"/><path d="M12 2.3 L22 12.3 L12 22.3" fill="none" stroke="#d6d6d6" stroke-width="3.6"/></svg>
<svg style="position:absolute;left:1919px;top:1159px;overflow:visible;" width="34" height="34" viewBox="0 0 34 34"><path d="M2 19 V30.8 H30 V19" fill="none" stroke="#4a78bb" stroke-width="4" stroke-linejoin="miter"/><path d="M16 1 V21" stroke="#4a78bb" stroke-width="4"/><path d="M7 12 L16 21 L25 12" fill="none" stroke="#4a78bb" stroke-width="4"/></svg>
<svg style="position:absolute;left:2022.6px;top:1160px;overflow:visible;" width="26" height="25" viewBox="0 0 26 25"><rect x="0" y="0" width="25.8" height="24" fill="#4a78bb"/><path d="M12.3 10.3 L4.8 17.8" stroke="#fff" stroke-width="2.2"/><path d="M4 11 V18.3 H11.5" fill="none" stroke="#fff" stroke-width="2.4"/></svg>
<div style="position:absolute;left:474px;top:1232px;width:1590px;height:90px;background:#f8f8f8;"></div>
<div id="t81" style="position:absolute;left:580.60px;top:1266.18px;font-size:24px;line-height:24px;font-weight:700;color:#3a3a3a;white-space:pre;letter-spacing:1.090px;">Work Order</div>
<div id="t82" style="position:absolute;left:823.00px;top:1266.18px;font-size:24px;line-height:24px;font-weight:700;color:#3a3a3a;white-space:pre;letter-spacing:1.097px;">Description</div>
<div id="t83" style="position:absolute;left:1398.50px;top:1266.18px;font-size:24px;line-height:24px;font-weight:700;color:#3a3a3a;white-space:pre;letter-spacing:0.363px;">Class</div>
<div id="t84" style="position:absolute;left:1640.00px;top:1266.18px;font-size:24px;line-height:24px;font-weight:700;color:#3a3a3a;white-space:pre;letter-spacing:1.128px;">Status</div>
<div id="t85" style="position:absolute;left:1813.00px;top:1266.18px;font-size:24px;line-height:24px;font-weight:700;color:#3a3a3a;white-space:pre;letter-spacing:1.089px;">Relationship</div>
<div style="position:absolute;left:474px;top:1322px;width:1590px;height:69.5px;background:#e0f0f8;"></div>
<svg style="position:absolute;left:503.99999999999994px;top:1346.3px;overflow:visible;" width="16.8" height="23.0" viewBox="0 0 16.8 23.0"><path d="M4 4 L12.8 11.5 L4 19.0" fill="none" stroke="#4a78bb" stroke-width="3.9" stroke-linecap="round" stroke-linejoin="round"/></svg>
<div id="t86" style="position:absolute;left:578.00px;top:1349.68px;font-size:24px;line-height:24px;font-weight:400;color:#161616;white-space:pre;letter-spacing:1.003px;">1323</div>
<div style="position:absolute;left:575.7px;top:1381.5px;width:175px;height:2px;background:#d8d8d8;"></div>
<svg style="position:absolute;left:772.5px;top:1351.5px;overflow:visible;" width="18" height="23.6" viewBox="0 0 18 23.6"><path d="M4 4 L14 11.8 L4 19.6" fill="none" stroke="#4a78bb" stroke-width="3.9" stroke-linecap="round" stroke-linejoin="round"/></svg>
<div style="position:absolute;left:823.00px;top:1345.68px;width:424px;height:32px;overflow:hidden"><div id="t87" style="position:absolute;left:0;top:4px;font-size:24px;line-height:24px;color:#161616;white-space:pre;letter-spacing:-0.019px;">End User Issues,Facility,Heating/Air,Too Hot</div></div>
<div style="position:absolute;left:818px;top:1381px;width:432px;height:2.2px;background:#333;"></div>
<svg style="position:absolute;left:1269px;top:1350.5px;overflow:visible;" width="22" height="24" viewBox="0 0 22 24"><rect x="0.9" y="0.9" width="20.2" height="21.8" fill="#eef7fc" stroke="#5b8226" stroke-width="1.8"/><rect x="0" y="0" width="22" height="6.2" fill="#5b8226"/><path d="M5.2 12 H17.3 M5.2 15.2 H17.3 M5.2 18.4 H17.3" stroke="#5b8226" stroke-width="1.6" stroke-linecap="round"/></svg>
<div id="t88" style="position:absolute;left:1396.40px;top:1349.68px;font-size:24px;line-height:24px;font-weight:400;color:#161616;white-space:pre;letter-spacing:0px;transform:scaleX(0.9043);transform-origin:0 0;">WORKORDER</div>
<div style="position:absolute;left:1394.5px;top:1382px;width:174.3px;height:2px;background:#d8d8d8;"></div>
<svg style="position:absolute;left:1584px;top:1348px;overflow:visible;" width="30" height="30" viewBox="0 0 30 30"><circle cx="10.7" cy="10.6" r="9.1" fill="none" stroke="#4a78bb" stroke-width="3.1"/><g transform="translate(18.2 19) rotate(42)"><rect x="0" y="-3.2" width="10.5" height="6.4" fill="#4a78bb"/></g></svg>
<div id="t89" style="position:absolute;left:1636.60px;top:1347.14px;font-size:27px;line-height:27px;font-weight:400;color:#161616;white-space:pre;letter-spacing:0px;transform:scaleX(0.9585);transform-origin:0 0;">WAPPR</div>
<div id="t90" style="position:absolute;left:1809.80px;top:1347.14px;font-size:27px;line-height:27px;font-weight:400;color:#161616;white-space:pre;letter-spacing:0px;transform:scaleX(0.9399);transform-origin:0 0;">FOLLOWUP</div>
<svg style="position:absolute;left:1994px;top:1342.5px;overflow:visible;" width="22" height="30" viewBox="0 0 22 30"><rect x="5" y="0.5" width="11.4" height="3.2" rx="1" fill="#4a78bb"/><rect x="0.2" y="5.3" width="21" height="3.4" rx="1" fill="#4a78bb"/><path d="M1.8 8.5 H19.5 V29 H1.8 Z" fill="#4a78bb"/><rect x="5" y="10" width="2" height="16" fill="#c3d6ec"/><rect x="9.8" y="10" width="2" height="16" fill="#c3d6ec"/><rect x="14.6" y="10" width="2" height="16" fill="#c3d6ec"/></svg>
<div style="position:absolute;left:498px;top:1419px;width:264px;height:78px;background:#fff;border:3px solid #4a78bb;"></div>
<div id="t91" style="position:absolute;left:532.00px;top:1447.38px;font-size:24px;line-height:24px;font-weight:400;color:#4a78bb;white-space:pre;letter-spacing:-0.122px;">Select Work Order</div>
<div style="position:absolute;left:775.4px;top:1416px;width:185.6px;height:84px;background:#4a78bb;"></div>
<div id="t92" style="position:absolute;left:810.20px;top:1444.70px;font-size:28px;line-height:28px;font-weight:400;color:#fff;white-space:pre;letter-spacing:-0.635px;">New Row</div>
<div style="position:absolute;left:0px;top:1680px;width:3330px;height:74px;background:linear-gradient(to bottom, rgba(0,0,0,0) 0%, rgba(0,0,0,0.02) 40%, rgba(0,0,0,0.06) 75%, rgba(0,0,0,0.13) 100%);"></div>
<div style="position:absolute;left:3130px;top:1680px;width:200px;height:74px;background:linear-gradient(to right, rgba(255,255,255,0) 0%, rgba(255,255,255,0.75) 100%);"></div>
<svg style="position:absolute;left:0px;top:1734px;overflow:visible;" width="20" height="20" viewBox="0 0 20 20"><path d="M0 0 V20 H20 A20 20 0 0 1 0 0 Z" fill="#1c2c42"/></svg>
<svg style="position:absolute;left:3312px;top:1734px;overflow:visible;" width="18" height="20" viewBox="0 0 18 20"><path d="M0 20 A20 20 0 0 0 18 8.72 V20 Z" fill="#6b2f52"/></svg></body></html>
